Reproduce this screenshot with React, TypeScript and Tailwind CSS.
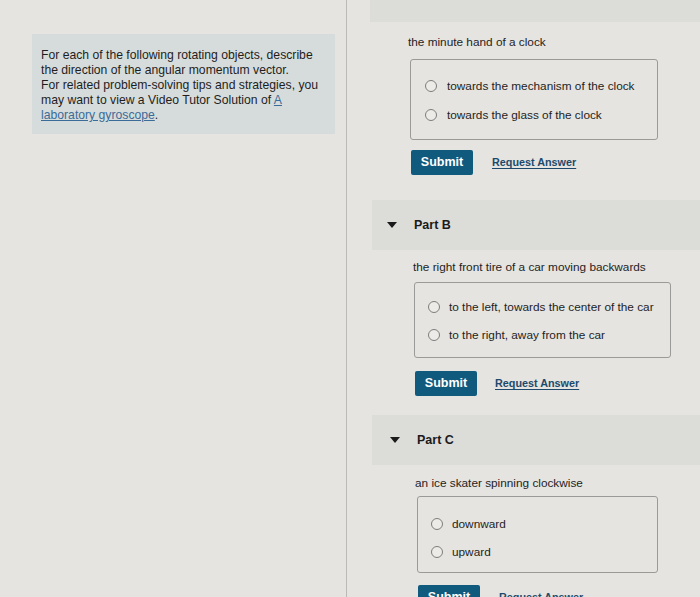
import React from "react";

const font = { fontFamily: '"Liberation Sans", Arial, Helvetica, sans-serif' };

function Radio({ label, mt, ml, gap }: { label: string; mt: string; ml: string; gap: string }) {
  return (
    <div className={`flex items-center ${mt} ${ml}`}>
      <span className="block w-[12px] h-[12px] rounded-full border-[1.5px] border-[#7d7d7d] bg-[#ecebe8] shrink-0" />
      <span className={`${gap} text-[11.8px] leading-[16px] text-[#1e1e1e]`}>{label}</span>
    </div>
  );
}

function Buttons({ mt, ml, gap }: { mt: string; ml: string; gap: string }) {
  return (
    <div className={`flex items-center ${mt} ${ml}`}>
      <div className="w-[62px] h-[25px] bg-[#0f5a7d] rounded-[2px] flex items-center justify-center text-white text-[12.5px] font-bold">
        Submit
      </div>
      <span className={`${gap} text-[10.8px] font-bold text-[#1d4a6c] underline underline-offset-2`}>
        Request Answer
      </span>
    </div>
  );
}

function Band({ label, mt, tri, lab }: { label: string; mt: string; tri: string; lab: string }) {
  return (
    <div className={`${mt} ml-[25px] h-[50px] bg-[#dcdcd9] flex items-center`}>
      <svg width="10" height="7" viewBox="0 0 10 7" className={tri}>
        <path d="M0 0 L10 0 L5 6 Z" fill="#1a1a1a" />
      </svg>
      <span className={`${lab} text-[12.5px] font-bold text-[#1a1a1a]`}>{label}</span>
    </div>
  );
}

export default function App() {
  return (
    <div style={font} className="w-[700px] h-[597px] overflow-hidden bg-[#e5e4e0] flex">
      {/* left column */}
      <div className="w-[347px] h-full border-r border-[#b9b9b6] shrink-0">
        <div className="ml-[32px] mt-[34px] w-[303px] h-[100px] bg-[#d6dcdb] pt-[14px] pl-[9px] pr-[6px]">
          <p className="text-[12.2px] leading-[15px] text-[#1e1e1e]">
            For each of the following rotating objects, describe the direction of the angular momentum vector.
            <br />
            For related problem-solving tips and strategies, you may want to view a Video Tutor Solution of{" "}
            <span className="text-[#3b6b98] underline">A laboratory gyroscope</span>.
          </p>
        </div>
      </div>

      {/* right column */}
      <div className="flex-1 min-w-0">
        <div className="ml-[23px] h-[22px] bg-[#dcdcd9]" />

        {/* Part A */}
        <div className="mt-[12px] ml-[61px] text-[11.8px] leading-[16px] text-[#1e1e1e]">the minute hand of a clock</div>
        <div className="mt-[9px] ml-[63px] w-[248px] h-[81px] border border-[#9a9a98] rounded-[3px] pt-[18px]">
          <Radio label="towards the mechanism of the clock" mt="mt-0" ml="ml-[14px]" gap="ml-[10px]" />
          <Radio label="towards the glass of the clock" mt="mt-[13px]" ml="ml-[14px]" gap="ml-[10px]" />
        </div>
        <Buttons mt="mt-[10px]" ml="ml-[64px]" gap="ml-[19px]" />

        {/* Part B */}
        <Band label="Part B" mt="mt-[25px]" tri="ml-[15px]" lab="ml-[17px]" />
        <div className="mt-[9px] ml-[66px] text-[11.8px] leading-[16px] text-[#1e1e1e]">
          the right front tire of a car moving backwards
        </div>
        <div className="mt-[7px] ml-[67px] w-[257px] h-[76px] border border-[#9a9a98] rounded-[3px] pt-[16px]">
          <Radio label="to the left, towards the center of the car" mt="mt-0" ml="ml-[13px]" gap="ml-[9px]" />
          <Radio label="to the right, away from the car" mt="mt-[12px]" ml="ml-[13px]" gap="ml-[9px]" />
        </div>
        <Buttons mt="mt-[13px]" ml="ml-[68px]" gap="ml-[18px]" />

        {/* Part C */}
        <Band label="Part C" mt="mt-[19px]" tri="ml-[18px]" lab="ml-[17px]" />
        <div className="mt-[10px] ml-[68px] text-[11.8px] leading-[16px] text-[#1e1e1e]">
          an ice skater spinning clockwise
        </div>
        <div className="mt-[5px] ml-[70px] w-[241px] h-[77px] border border-[#9a9a98] rounded-[3px] pt-[19px]">
          <Radio label="downward" mt="mt-0" ml="ml-[13px]" gap="ml-[9px]" />
          <Radio label="upward" mt="mt-[12px]" ml="ml-[13px]" gap="ml-[9px]" />
        </div>
        <Buttons mt="mt-[12px]" ml="ml-[71px]" gap="ml-[19px]" />
      </div>
    </div>
  );
}
